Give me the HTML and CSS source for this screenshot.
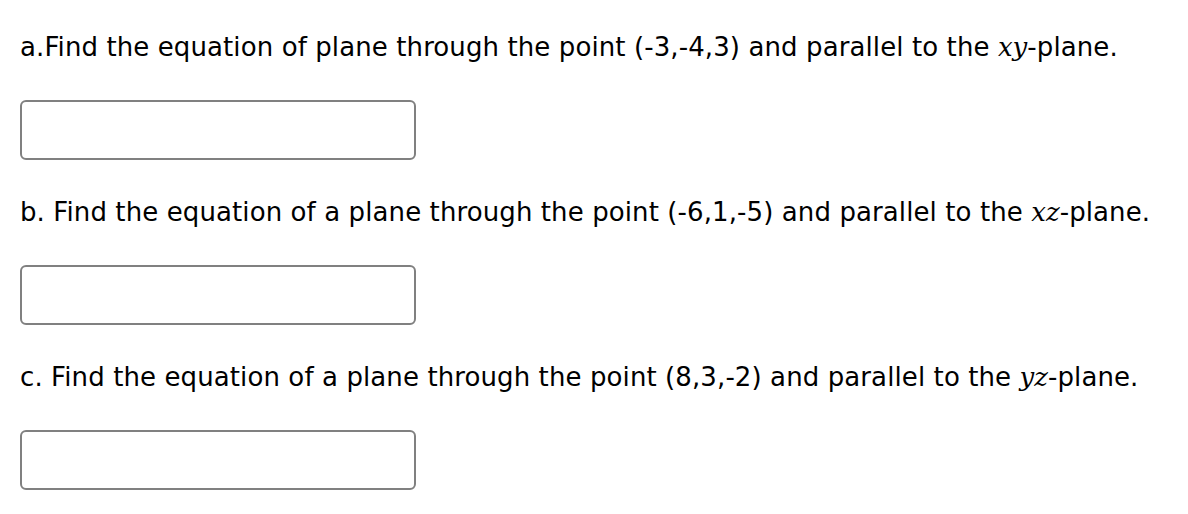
FILE: index.html
```html
<!DOCTYPE html>
<html lang="en">
<head>
    <meta charset="UTF-8"/>
    <title>Planes parallel to coordinate planes</title>
    <link rel="stylesheet" href="styles.css">
</head>
<body>
<div class="question">
    <p class="prompt">a.Find the equation of plane through the point (-3,-4,3) and parallel to the <span class="math">xy</span>-plane.</p>
    <input class="answer" type="text" aria-label="answer a"/>
</div>

<div class="question">
    <p class="prompt">b. Find the equation of a plane through the point (-6,1,-5) and parallel to the <span class="math">xz</span>-plane.</p>
    <input class="answer" type="text" aria-label="answer b"/>
</div>

<div class="question">
    <p class="prompt">c. Find the equation of a plane through the point (8,3,-2) and parallel to the <span class="math">yz</span>-plane.</p>
    <input class="answer" type="text" aria-label="answer c"/>
</div>
</body>
</html>
```

FILE: styles.css
```css
body {
    margin: 0;
    padding: 32px 20px 0;
    background: #fff;
    color: #000;
    font-family: "DejaVu Sans", sans-serif;
}

.question {
    display: flex;
    flex-direction: column;
    align-items: flex-start;
}

.prompt {
    margin: 37px 0 0;
    font-size: 26px;
    line-height: 30px;
    letter-spacing: 0.1px;
    white-space: nowrap;
}

.question:first-child .prompt {
    margin-top: 0;
}

.math {
    font-family: "DejaVu Serif", serif;
    font-style: italic;
    letter-spacing: 0;
}

.answer {
    box-sizing: border-box;
    margin-top: 38px;
    width: 396px;
    height: 60px;
    border: 2px solid #808080;
    border-radius: 6px;
    background: #fff;
}
```
